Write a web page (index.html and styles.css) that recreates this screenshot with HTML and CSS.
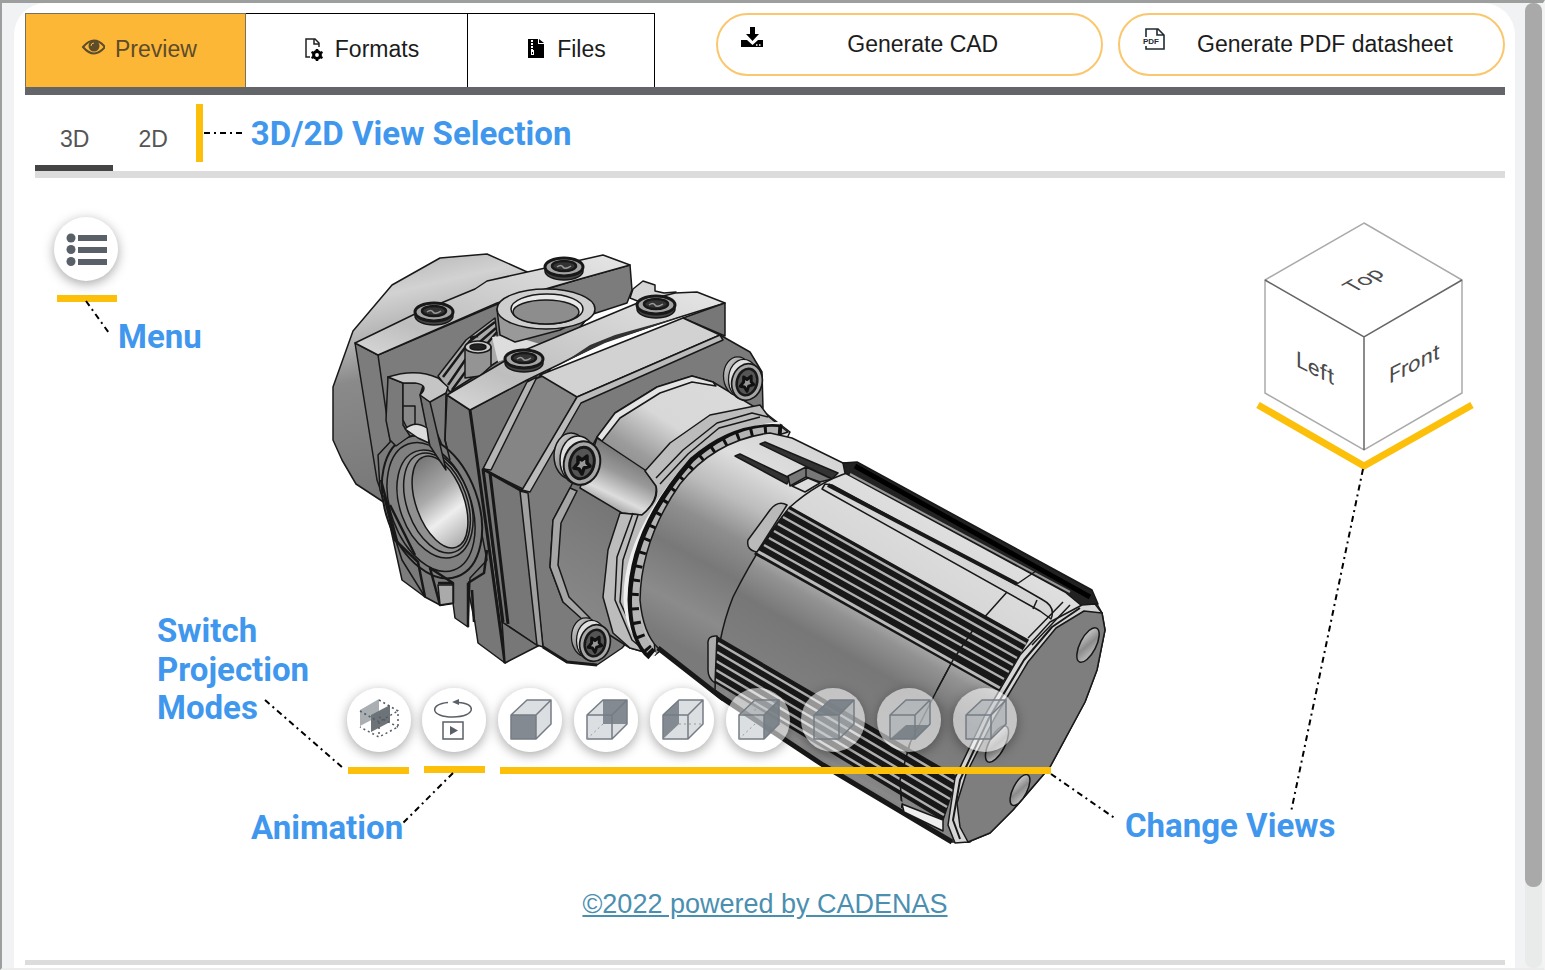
FILE: index.html
```html
<!DOCTYPE html>
<html lang="en">
<head>
<meta charset="utf-8">
<title>CAD Preview</title>
<link rel="stylesheet" href="styles.css">
</head>
<body>
<div class="frame">
<main class="card">
  <header class="topbar">
    <nav class="tabs" aria-label="Sections">
      <button class="tab tab-active" type="button">
        <svg class="tab-icon" viewBox="0 0 24 24" aria-hidden="true"><path d="M2 9Q13 -4 24 9Q13 22 2 9Z" fill="none" stroke="currentColor" stroke-width="2"/><circle cx="13" cy="8" r="5.500" fill="currentColor"/><path d="M10 8q0-3 3-3" fill="none" stroke="#fdb737"/></svg>
        Preview</button>
      <button class="tab" type="button">
        <svg class="tab-icon" viewBox="0 0 24 24" aria-hidden="true"><path d="M9 19H5V1h9l4 4v4M13 1v5h5" fill="none" stroke="#222" stroke-width="1.5"/><circle cx="16" cy="17" r="3.4" fill="none" stroke="#000" stroke-width="3"/><path d="M16 11v2M16 21v2M10.500 14l2 1M19.500 19l2 1M10.500 20l2-1M19.500 15l2-1" stroke="#000" stroke-width="2.500"/></svg>
        Formats</button>
      <button class="tab" type="button">
        <svg class="tab-icon" viewBox="0 0 24 24" aria-hidden="true"><path d="M5 1h10v5h6v14H5zM16 1l5 4h-5z" fill="#000"/><path d="M9 2v11" stroke="#fff" stroke-width="2" stroke-dasharray="2 1"/><path d="M8 12h3v5H8z" fill="#fff"/><path d="M9 14h1v2H9z" fill="#000"/></svg>
        Files</button>
    </nav>
    <div class="actions">
      <button class="pill" type="button">
        <svg class="pill-icon" viewBox="0 0 24 24" aria-hidden="true"><path d="M10 0h5v7h4l-6.500 7L6 7h4zM1 13h6l5.500 5 5.500-5h5v7H1z" fill="#000"/><path d="M16 18h1.500M19 18h1.500" stroke="#fff" stroke-width="1.500"/></svg>
        <span class="pill-label">Generate CAD</span></button>
      <button class="pill" type="button">
        <svg class="pill-icon" viewBox="0 0 24 24" aria-hidden="true"><path d="M4 10V2h12l6 6v14H4v-3M15 2v6h7" fill="none" stroke="#222b31" stroke-width="1.600"/><text class="pdf-mark" x="1" y="17">PDF</text></svg>
        <span class="pill-label">Generate PDF datasheet</span></button>
    </div>
  </header>

  <section class="preview">
    <nav class="views" aria-label="View">
      <button class="view view-active" type="button">3D</button>
      <button class="view" type="button">2D</button>
      <span class="marker"></span>
      <svg class="leader" viewBox="0 0 40 2" aria-hidden="true"><path class="dash" d="M0 1H40"/></svg>
      <span class="note">3D/2D View Selection</span>
    </nav>

    <div class="stage">
      <svg class="scene" viewBox="35 178 1470 682">
        <defs>
          <linearGradient id="disc" x1="0" y1="0" x2=".25" y2="1"><stop offset="0" stop-color="#aaa"/><stop offset=".2" stop-color="#d2d2d2"/><stop offset=".34" stop-color="#b5b5b5"/><stop offset=".5" stop-color="#8a8a8a"/><stop offset="1" stop-color="#767676"/></linearGradient>
          <linearGradient id="strip" x1="0" y1="1" x2="1" y2="0"><stop offset="0" stop-color="#d8d8d8"/><stop offset=".25" stop-color="#bebebe"/><stop offset="1" stop-color="#e6e6e6"/></linearGradient>
          <linearGradient id="bowl" gradientUnits="userSpaceOnUse" x1="830" y1="450" x2="715" y2="665"><stop offset="0" stop-color="#d4d4d4"/><stop offset=".2" stop-color="#dedede"/><stop offset=".36" stop-color="#bcbcbc"/><stop offset=".5" stop-color="#8e8e8e"/><stop offset=".65" stop-color="#787878"/><stop offset=".85" stop-color="#8b8b8b"/><stop offset="1" stop-color="#7a7a7a"/></linearGradient>
          <linearGradient id="sleeve" gradientUnits="userSpaceOnUse" x1="960" y1="530" x2="830" y2="760"><stop offset="0" stop-color="#dfdfdf"/><stop offset=".35" stop-color="#d3d3d3"/><stop offset=".5" stop-color="#929292"/><stop offset=".62" stop-color="#777"/><stop offset="1" stop-color="#858585"/></linearGradient>
          <linearGradient id="neck" gradientUnits="userSpaceOnUse" x1="715" y1="385" x2="575" y2="600"><stop offset="0" stop-color="#dadada"/><stop offset=".22" stop-color="#d8d8d8"/><stop offset=".38" stop-color="#9c9c9c"/><stop offset=".6" stop-color="#757575"/><stop offset="1" stop-color="#868686"/></linearGradient>
          <linearGradient id="lug" gradientUnits="userSpaceOnUse" x1="632" y1="455" x2="608" y2="505"><stop offset="0" stop-color="#777"/><stop offset=".4" stop-color="#999"/><stop offset=".8" stop-color="#ddd"/><stop offset="1" stop-color="#aaa"/></linearGradient>
          <linearGradient id="bore" gradientUnits="userSpaceOnUse" x1="425" y1="455" x2="455" y2="550"><stop offset="0" stop-color="#727272"/><stop offset=".4" stop-color="#aaa"/><stop offset=".65" stop-color="#eee"/><stop offset="1" stop-color="#a5a5a5"/></linearGradient>
          <linearGradient id="metal" x1="0" y1="0" x2="1" y2="1"><stop offset="0" stop-color="#dedede"/><stop offset=".5" stop-color="#8b8b8b"/><stop offset="1" stop-color="#d0d0d0"/></linearGradient>
          <g id="plug"><ellipse cy="4" rx="19" ry="9" fill="#444"/><ellipse rx="19" ry="9" fill="#a4a4a4" stroke-width="3"/><ellipse cy="-1" rx="12" ry="5" fill="#333" stroke-width="2.500"/><path d="M-7 0q4-3 6 0t8-1" stroke="#999" stroke-width="1.500" fill="none"/></g>
          <g id="screw"><ellipse cx="-11" cy="-7" rx="17" ry="23" fill="url(#metal)"/><ellipse cx="-4" cy="-3" rx="18" ry="24" fill="#e0e0e0"/><ellipse rx="18" ry="22" transform="rotate(15)" fill="#a7a7a7" stroke-width="2"/><ellipse rx="12" ry="16" transform="rotate(15)" fill="#555" stroke-width="3"/><path d="M-4 -6l4 3 5-4 0 7 3 3-6 2-2 6-3-5-5-1 4-5z" fill="#999" stroke="#111" stroke-width="3.500"/></g>
        </defs>

        <g class="part">
          <!-- rear disc -->
          <path d="M440 258L487 254L525 271L600 300L470 480L385 503L356 484L342 460L333 440V387L353 331L392 285Z" fill="url(#disc)"/>
          <!-- hook behind the rear plate -->
          <path d="M633 289L643 281L655 285V291L664 293L676 292L668 299L640 302L630 298Z" fill="#d5d5d5"/>
          <!-- rear plate -->
          <path d="M355 343L378 355L500 303L580 279L630 265L632 290L627 303L590 315L520 400L448 470L425 597L402 580L385 503L377 480Z" fill="#7c7c7c"/>
          <path d="M355 343L417 313L475 289L487 281L550 267L603 255L630 265L580 279L497 303L378 355Z" fill="url(#strip)"/>
          <path d="M378 355L393 460"/>
          <!-- spring and gap between plates -->
          <path d="M495 318L466 340L438 376L450 392L500 360Z" fill="#aaa"/>
          <path d="M495 322L470 341L443 377M496 328L474 347L448 385M497 332L480 352L452 390M470 338l8-2" stroke-width="2.500"/>
          <path d="M492 337L510 335L540 344L498 362Z" fill="#ddd" stroke="none"/>
          <path d="M465 347V378L480 376L491 366V347Z" fill="#949494"/>
          <ellipse cx="478" cy="347" rx="13" ry="6" fill="#ccc"/><ellipse cx="478" cy="347" rx="8" ry="3" fill="#222"/>
          <!-- front clamp plate -->
          <path d="M447 395L470 410L527 380L560 400L540 640L505 663L478 643L475 623L462 560L455 480L445 440Z" fill="#777"/>
          <path d="M447 395L503 362L525 350L580 327L640 302L675 293L697 292L725 303L680 317L603 342L560 364L527 380L470 410Z" fill="url(#strip)"/>
          <path d="M725 303V336L683 318Z" fill="#777"/>
          <path d="M563 363L590 345L615 335L680 317L640 331L605 343Z" fill="#333" stroke="none"/>
          <path d="M470 410L477 460L505 663" stroke-width="3"/>
          <!-- top boss -->
          <path d="M497 309L500 335L515 342L560 330L595 312Z" fill="#999"/>
          <ellipse cx="546" cy="309" rx="49" ry="20" fill="#cecece"/>
          <ellipse cx="547" cy="309" rx="36" ry="15" fill="#e8e8e8"/>
          <ellipse cx="546" cy="312" rx="33" ry="12" fill="#8d8d8d"/>
          <use href="#plug" x="434" y="312"/><use href="#plug" x="564" y="267"/><use href="#plug" x="656" y="305"/><use href="#plug" x="524" y="359"/>
          <!-- left port -->
          <path d="M388 377L403 383L423 388L420 395L440 440L455 480L475 500L487 560L470 578L468 627L455 618L453 603L440 605L425 597L402 560L380 490L378 455L392 440Z" fill="#7a7a7a"/>
          <ellipse cx="432" cy="507" rx="46" ry="74" transform="rotate(-20 432 507)" fill="#7d7d7d" stroke-width="2"/>
          <ellipse cx="431" cy="507" rx="40" ry="67" transform="rotate(-20 431 507)" fill="#808080"/>
          <ellipse cx="435" cy="504" rx="35" ry="56" transform="rotate(-20 435 504)" fill="#8e8e8e"/>
          <ellipse cx="437" cy="503" rx="30" ry="52" transform="rotate(-20 437 503)" fill="#909090"/>
          <ellipse cx="440" cy="502" rx="24" ry="48" transform="rotate(-20 440 502)" fill="url(#bore)"/>
          <path d="M388 377L403 383V425L410 436L396 446L390 440L386 420Z" fill="#7a7a7a"/>
          <path d="M420 395L430 402L446 470L430 446L424 420Z" fill="#757575"/>
          <path d="M403 383H424L420 395L426 425L428 440L408 430L403 420Z" fill="#888"/>
          <path d="M388 377Q416 368 438 378L448 387L446 393L430 402L420 395Q430 385 415 383L403 383Z" fill="#c5c5c5"/>
          <path d="M403 406H415V425M446 393L445 440L450 460" fill="none"/>
          <path d="M405 429Q415 420 427 428L429 443L418 438Z" fill="#ddd"/>
          <path d="M384 495L395 540L418 562L425 597M381 480L398 545M430 568L453 583L453 603L440 605ZM438 583h14M468 583L484 573L487 550M468 583V627M472 590L474 622M390 505L415 555" fill="none" stroke-width="2.500"/>
          <path d="M438 585H453V603L440 605Z" fill="#aaa"/>
          <!-- adapter body -->
          <path d="M577 397L720 335L750 352L762 372L763 408L700 560L622 648L597 665L567 662L543 647L525 490Z" fill="#7b7b7b"/>
          <path d="M530 381L548 374L577 397L525 490L483 469Z" fill="#858585"/>
          <path d="M540 375L683 318L720 335L577 397Z" fill="#d2d2d2"/>
          <path d="M577 397L720 335L723 340L581 403L530 492L522 490Z" fill="#bbb"/>
          <path d="M527 382L537 377L491 470L483 469Z" fill="#b5b5b5"/>
          <path d="M483 469L522 491L538 646L502 622Z" fill="#777"/>
          <path d="M520 491L528 493L543 647L537 645Z" fill="#a0a0a0"/>
          <path d="M502 622L538 646L505 663Z" fill="#777"/>
          <path d="M483 469L503 622M490 473L508 624M483 469L522 491" stroke-width="3"/>
          <path d="M543 647L567 662L597 665" stroke-width="3"/>
          <!-- neck -->
          <path d="M597 437L615 413L657 387L692 376L713 382L768 415L790 432L700 620L655 655L630 648L583 618L563 602L550 567L553 520L570 488Z" fill="url(#neck)"/>
          <path d="M597 437L615 413L657 387L692 376L713 382L716 386L692 382L660 393L620 418L602 441Z" fill="#e4e4e4"/>
          <path d="M570 488L577 491L561 523L558 565L569 597L590 618L583 620L563 602L550 567L553 520Z" fill="#a5a5a5"/>
          <path d="M597 438L645 470L656 486Q658 502 642 515L622 513L580 488Z" fill="url(#lug)"/>
          <!-- collar -->
          <path d="M645 471L670 443L710 415L760 405L769 417L788 432L700 460L650 560L655 655L630 648L613 633L603 597L608 550L620 513L642 515Q660 500 656 486Z" fill="#bcbcbc"/>
          <path d="M656 478L683 450L717 423L752 413L768 417M660 484L688 454L719 428L760 417M633 513L617 557L615 600L632 640L650 655M638 515L623 560L620 602L638 641"/>
          <path d="M780 424Q715 432 683 470Q625 540 626 600Q627 635 655 655" stroke="#efefef" stroke-width="5"/>
          <path d="M782 430Q735 426 694 462Q634 530 633 600Q634 640 652 655" stroke="#111" stroke-width="11"/>
          <path d="M778 431Q738 428 697 464Q638 530 636 600Q636 636 650 650" stroke="#b4b4b4" stroke-width="8" stroke-dasharray="11 3"/>
          <!-- bowl -->
          <path d="M770 433L792 438L843 463L860 476L800 700L722 700L658 648Q643 633 640 600Q641 540 680 484Q715 440 770 433Z" fill="url(#bowl)"/>
          <path d="M735 456L740 454L790 478L787 484ZM760 444L765 442L838 473L832 479Z" fill="#333"/>
          <path d="M788 476L806 467V477L790 486ZM806 467L832 479L820 482L806 477Z" fill="#777"/>
          <path d="M792 486L808 478L820 483L805 492Z" fill="#ddd"/>
          <!-- grip sleeve -->
          <path d="M850 472Q818 482 790 507Q762 540 733 597Q716 640 715 690L823 765L952 842L970 842L1085 700L1102 613L1092 595L855 463L843 463Z" fill="url(#sleeve)"/>
          <path d="M843 463L857 462L1092 590L1098 604L1082 606L1065 592L845 473Z" fill="#222"/>
          <path d="M850 474L1070 592" stroke="#999" stroke-width="2"/>
          <path d="M855 466L1090 597" stroke="#000" stroke-width="5"/>
          <path d="M825 484L832 485L1017 585L1043 600Q1056 607 1051 619L1040 611L822 489Z" fill="#d6d6d6"/>
          <path d="M828 485L1017 584" stroke-width="4"/>
          <path d="M1036 571L1017 584M1007 592L973 630L953 660L937 690L910 743L900 780L902 808M1037 600L1033 609" fill="none"/>
          <!-- upper ribs -->
          <path d="M790 507L1028 640L998 690L755 554Z" fill="#181818"/>
          <path class="rib" d="M788 510L1026 644M783 517L1022 651M778 524L1017 658M774 531L1013 665M769 538L1009 672M764 545L1004 679"/>
          <path d="M757 551L1000 688" stroke="#bbb" stroke-width="3"/>
          <path d="M787 505Q778 500 770 510L748 540Q746 550 757 552Z" fill="#b9b9b9"/>
          <!-- lower ribs -->
          <path d="M717 637L957 777L943 820L715 682Z" fill="#181818"/>
          <path class="rib" d="M718 643L956 783M717 652L953 791M716 661L950 799M716 670L947 807M715 679L944 815"/>
          <path d="M717 636Q707 635 708 645V670Q708 678 715 683Z" fill="#aaa"/>
          <path d="M973 630L953 660L937 690M910 743L900 780L902 808"/>
          <path d="M658 648L722 698L823 765L952 842" stroke-width="5"/>
          <path d="M725 693L840 768L902 804" stroke="#888" stroke-width="4"/>
          <path d="M902 804L943 820V831L904 812Z" fill="#eee"/>
          <!-- end cap -->
          <path d="M1082 605L1050 622L1020 655L985 715L955 778L948 825L955 843L968 842L990 833L1013 810L1050 767L1085 702L1097 670L1105 630L1102 613L1095 604Z" fill="#d6d6d6"/>
          <path d="M1084 611L1056 628L1028 662L994 719L966 774L957 803L960 827L968 842L990 833L1013 810L1050 767L1085 702L1097 670L1105 630L1102 613Z" fill="#7e7e7e"/>
          <path d="M1080 608L1052 627L1024 660L989 718L960 780L953 820L960 839" stroke-width="2"/>
          <path d="M1063 602L1028 638M1070 605L1032 645"/>
          <g fill="url(#metal)"><ellipse cx="1088" cy="645" rx="8" ry="19" transform="rotate(27 1088 645)"/><ellipse cx="997" cy="744" rx="8" ry="20" transform="rotate(27 997 744)"/><ellipse cx="1020" cy="790" rx="7" ry="17" transform="rotate(27 1020 790)"/></g>
          <use href="#screw" x="582" y="463"/>
          <use href="#screw" transform="translate(747 382) scale(.84)"/>
          <use href="#screw" transform="translate(595 643) scale(.84)"/>
        </g>

        <!-- orientation cube -->
        <g class="cube">
          <path class="cube-outer" d="M1364 223L1462 280V393L1364 450L1265 393V280Z"/>
          <path class="cube-inner" d="M1265 280L1364 337L1462 280M1364 337V450"/>
          <text transform="matrix(.866 -.5 .866 .5 1354 293)">Top</text>
          <text transform="translate(1296 366) skewY(27)">Left</text>
          <text transform="translate(1389 384) skewY(-27)">Front</text>
        </g>

        <!-- callouts -->
        <path class="mark" d="M57 298.500H117M348 770.500H409M424 769.500H485M500 770.500H1051M1258 405L1364 466L1472 405"/>
        <path class="dash" d="M86 301L109 333"/><path class="dash" d="M265 700L343 768"/><path class="dash" d="M453 773L402 824"/><path class="dash" d="M1051 774L1116 819"/><path class="dash" d="M1363 469L1291 812"/>
        <g class="callout">
          <text x="118" y="348">Menu</text>
          <text x="157" y="642">Switch</text><text x="157" y="681">Projection</text><text x="157" y="719">Modes</text>
          <text x="251" y="839">Animation</text>
          <text x="1125" y="837">Change Views</text>
        </g>
      </svg>

      <button class="round menu" type="button" aria-label="Menu">
        <svg viewBox="0 0 64 64"><g fill="#5a6067"><circle cx="17" cy="21" r="4.500"/><circle cx="17" cy="32.500" r="4.500"/><circle cx="17" cy="44.500" r="4.500"/><path d="M24 18h29v6H24zM24 30h29v6H24zM24 42h29v6H24z"/></g></svg>
      </button>

      <div class="toolbar">
        <button class="round" type="button" aria-label="Projection mode"><svg viewBox="0 0 64 64"><path d="M13 22L32 11V28L13 38Z" fill="#a9afb3"/><path d="M24 27L43 17V34L24 44Z" fill="#6d7479"/><path d="M32 12L51 23V39L32 49L13 39M13 23L32 34L51 23M32 34V49M32 29L51 39" fill="none" stroke="#555b60" stroke-width="1.500" stroke-dasharray="2 3"/></svg></button>
        <button class="round" type="button" aria-label="Animation"><svg viewBox="0 0 64 64"><g fill="none" stroke="#5a6067" stroke-width="1.500"><path d="M26 14.500C7 16 8 29 31 29S55 15 36 14.500"/><path d="M21 34H41V51H21Z"/></g><path d="M30 14l7-3v6zM28 38l8 4.500-8 4.500z" fill="#5a6067"/></svg></button>
        <button class="round" type="button" aria-label="Front view"><svg viewBox="0 0 64 64"><path class="face" d="M13 27L29 12H53V36L38 51H13Z"/><path class="face-on" d="M13 27H38V51H13Z"/><path class="edges" d="M13 27L29 12H53V36L38 51H13ZM13 27H38V51M38 27L53 12"/></svg></button>
        <button class="round" type="button" aria-label="Back view"><svg viewBox="0 0 64 64"><path class="face" d="M13 27L29 12H53V36L38 51H13Z"/><path class="face-on" d="M29 12H53V36H29Z"/><path class="edges" d="M13 27L29 12H53V36L38 51H13ZM13 27H38V51M38 27L53 12"/><path class="hidden" d="M13 51L29 36"/></svg></button>
        <button class="round" type="button" aria-label="Left view"><svg viewBox="0 0 64 64"><path class="face" d="M13 27L29 12H53V36L38 51H13Z"/><path class="face-on" d="M13 27L29 12V36L13 51Z"/><path class="edges" d="M13 27L29 12H53V36L38 51H13ZM13 27H38V51M38 27L53 12"/><path class="hidden" d="M29 36H53"/></svg></button>
        <button class="round" type="button" aria-label="Right view"><svg viewBox="0 0 64 64"><path class="face" d="M13 27L29 12H53V36L38 51H13Z"/><path class="face-on" d="M38 27L53 12V36L38 51Z"/><path class="edges" d="M13 27L29 12H53V36L38 51H13ZM13 27H38V51M38 27L53 12"/><path class="hidden" d="M13 51L29 36V12"/></svg></button>
        <button class="round" type="button" aria-label="Top view"><svg viewBox="0 0 64 64"><path class="face" d="M13 27L29 12H53V36L38 51H13Z"/><path class="face-on" d="M13 27L29 12H53L38 27Z"/><path class="edges" d="M13 27L29 12H53V36L38 51H13ZM13 27H38V51M38 27L53 12"/></svg></button>
        <button class="round" type="button" aria-label="Bottom view"><svg viewBox="0 0 64 64"><path class="face" d="M13 27L29 12H53V36L38 51H13Z"/><path class="face-on" d="M13 51L29 37H53L38 51Z"/><path class="edges" d="M13 27L29 12H53V36L38 51H13ZM13 27H38V51M38 27L53 12"/></svg></button>
        <button class="round" type="button" aria-label="Isometric view"><svg viewBox="0 0 64 64"><path class="face" d="M13 27L29 12H53V36L38 51H13Z"/><path class="edges" d="M13 27L29 12H53V36L38 51H13ZM13 27H38V51M38 27L53 12"/></svg></button>
      </div>
    </div>
  </section>

  <footer class="footer"><a class="credit" href="#">©2022 powered by CADENAS</a></footer>
</main>
<div class="scrollbar"><div class="thumb"></div></div>
</div>
</body>
</html>
```

FILE: styles.css
```css
* { box-sizing: border-box; }

body {
  margin: 0;
  font-family: "Liberation Sans", Arial, sans-serif;
  font-size: 23px;
  color: #1c1c1c;
}

button {
  margin: 0;
  font: inherit;
  color: inherit;
  cursor: pointer;
}

.frame {
  display: flex;
  min-height: 100vh;
  padding: 0 1px 0 10px;
  border: 2px solid #9c9f9d;
  border-top-width: 3px;
  border-right-color: #f4f4f4;
  border-bottom-color: #ececec;
  background: #f0f2f4;
}

.card {
  flex: 1;
  display: flex;
  flex-direction: column;
  margin: 0 10px 0 2px;
  padding: 10px 10px 3px 11px;
  border-radius: 32px 32px 0 0;
  background: #fff;
}

.scrollbar {
  width: 17px;
  border-radius: 8px;
  background: #e9eaea;
}

.thumb {
  height: 92vh;
  max-height: 884px;
  border-radius: 8px;
  background: #a9a9a9;
}

.topbar {
  display: flex;
  align-items: flex-start;
  border-bottom: 8px solid #636569;
}

.tabs { display: flex; }

.tab {
  display: flex;
  align-items: center;
  gap: 10px;
  height: 74px;
  padding: 0 48px 2px 55px;
  border: 1px solid #000;
  border-bottom: 0;
  border-left: 0;
  background: #fff;
}

.tab-active {
  border: 1px solid #77705c;
  border-bottom: 0;
  background: #fdb737;
  color: #5c4c2c;
}

.tab-icon {
  width: 24px;
  height: 24px;
}

.actions {
  display: flex;
  flex: 1;
  gap: 15px;
  margin-left: 61px;
}

.pill {
  display: flex;
  flex: 1;
  align-items: center;
  height: 63px;
  padding: 0 19px 0 22px;
  border: 2px solid #fac76e;
  border-radius: 32px;
  background: #fff;
}

.pill-icon {
  align-self: flex-start;
  width: 24px;
  height: 24px;
  margin-top: 12px;
}

.pdf-mark {
  font: bold 8px "Liberation Sans", sans-serif;
  fill: #222b31;
}

.pill-label {
  flex: 1;
  text-align: center;
}

.preview { padding-left: 10px; }

.views {
  display: flex;
  align-items: center;
  height: 83px;
  border-bottom: 7px solid #dcdcdc;
}

.view {
  height: 75px;
  padding: 18px 24px 0 25px;
  border: 0;
  border-bottom: 6px solid transparent;
  background: none;
  color: #555;
}

.view-active { border-bottom-color: #444; }

.marker {
  width: 7px;
  height: 58px;
  margin-left: 4px;
  background: #fcbf0a;
}

.leader {
  width: 40px;
  height: 2px;
  margin: 0 7px 0 1px;
}

.note,
.callout {
  font: bold 33px Roboto, sans-serif;
  color: #3f97ee;
  fill: #3f97ee;
}

.dash {
  fill: none;
  stroke: #000;
  stroke-width: 2;
  stroke-dasharray: 6 4 2 4;
}

.stage { position: relative; }

.scene {
  display: block;
  width: 100%;
}

.part {
  fill: none;
  stroke: #181818;
  stroke-width: 1.5;
  stroke-linejoin: round;
}

.rib { stroke: #b0b0b0; stroke-width: 2.5; }

.cube-outer { fill: #fff; stroke: #aaa; stroke-width: 1.5; }
.cube-inner { fill: none; stroke: #666; stroke-width: 1.5; }
.cube text { font: 22px Roboto, sans-serif; fill: #4c4c4c; }

.mark { fill: none; stroke: #fcbf0a; stroke-width: 7; }

.round {
  width: 64px;
  height: 64px;
  padding: 0;
  border: 0;
  border-radius: 50%;
  background: rgba(255, 255, 255, .55);
  box-shadow: 0 3px 12px rgba(0, 0, 0, .35);
}

.round svg {
  display: block;
  width: 64px;
  height: 64px;
}

.menu {
  position: absolute;
  top: 39px;
  left: 19px;
  background: #fff;
}

.toolbar {
  position: absolute;
  top: 74.8%;
  left: 21.2%;
  display: flex;
  justify-content: space-between;
  width: 45.6%;
}

.face { fill: #9aa2a9; fill-opacity: .35; }
.face-on { fill: #737b82; fill-opacity: .85; }
.edges { fill: none; stroke: #747c84; stroke-width: 1.5; stroke-linejoin: round; }
.hidden { fill: none; stroke: #999; stroke-width: 1; stroke-dasharray: 2 3; }

.footer {
  flex: 1;
  padding-top: 28px;
  border-bottom: 5px solid #dcdcdc;
  text-align: center;
}

.credit {
  font-size: 27px;
  line-height: 32px;
  color: #4b8fb0;
}
```
